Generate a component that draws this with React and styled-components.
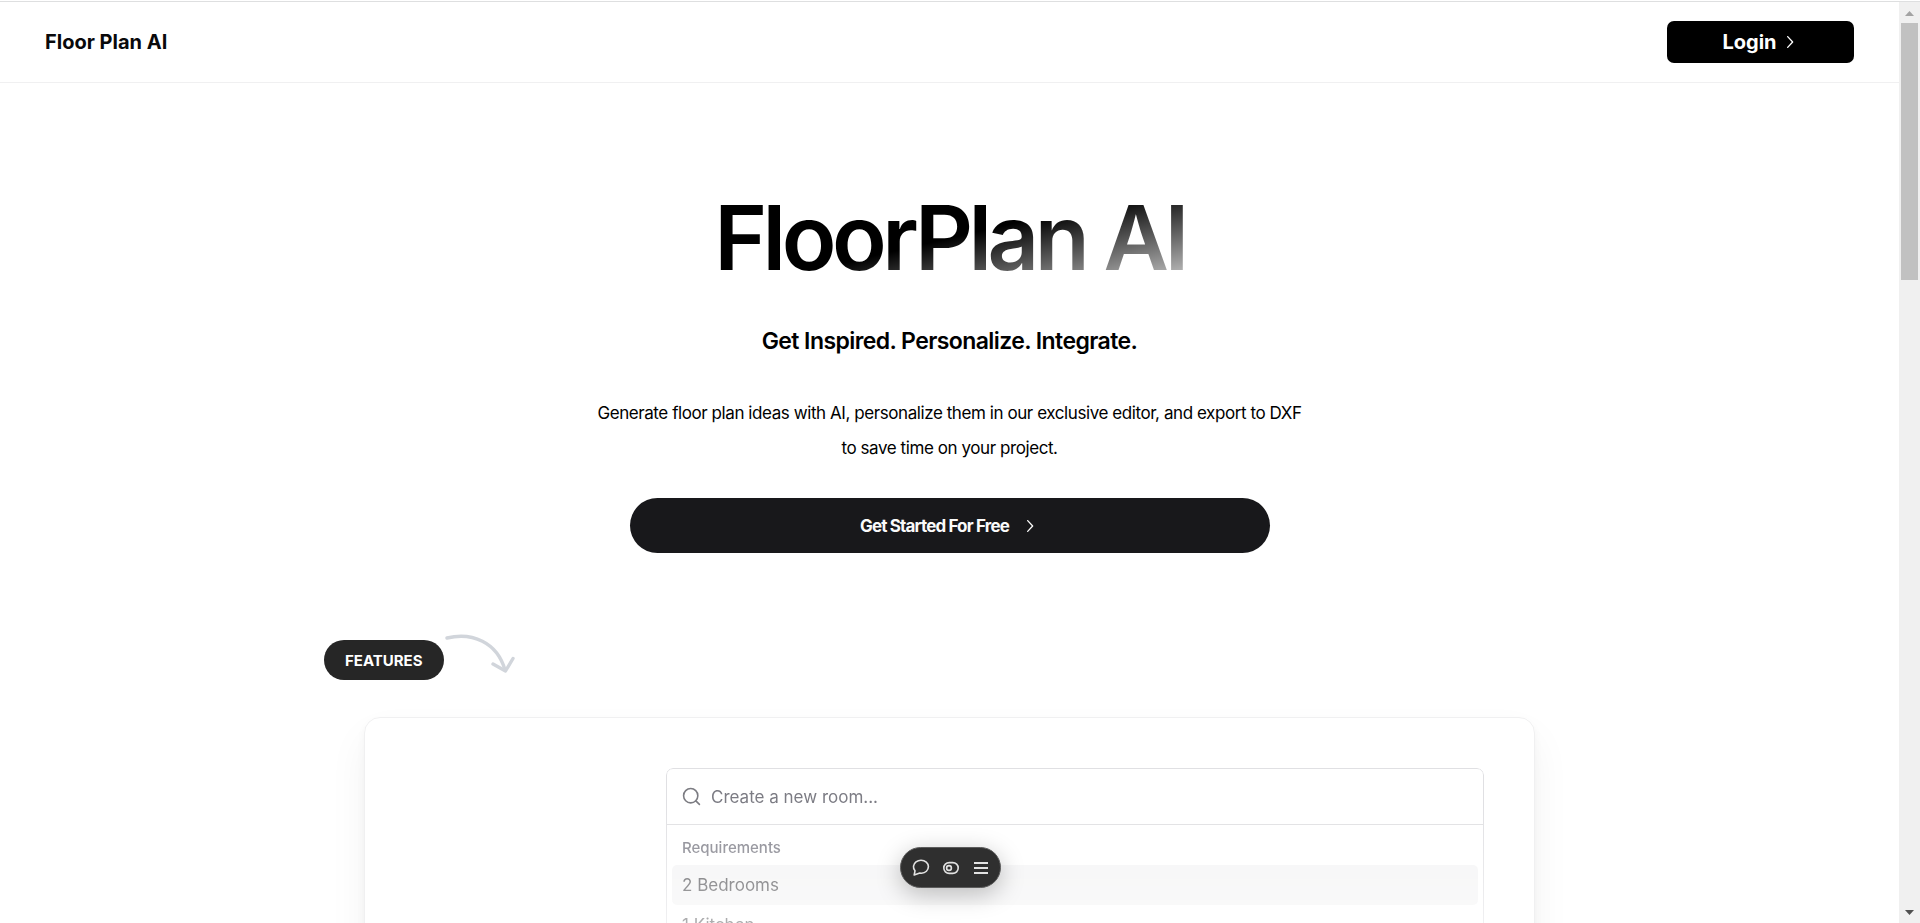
import React from 'react';
import styled, { createGlobalStyle } from 'styled-components';

const GlobalStyle = createGlobalStyle`
  * {
    box-sizing: border-box;
  }
  body {
    margin: 0;
    background: #fff;
    color: #09090b;
    font-family: Inter, 'Liberation Sans', sans-serif;
    overflow: hidden;
  }
  button,
  input {
    font-family: inherit;
  }
`;

const Window = styled.div`
  display: flex;
  height: 100vh;
  padding-top: 1px;
`;

const Page = styled.div`
  flex: 1;
  min-width: 0;
  overflow: hidden;
  border-top: 1px solid #dedfe0;
`;

const Header = styled.header`
  display: flex;
  align-items: center;
  justify-content: space-between;
  height: 81px;
  padding: 0 45px;
  border-bottom: 1px solid #f0f0f1;
`;

const Brand = styled.a`
  color: #09090b;
  font-size: 20px;
  font-weight: 700;
  line-height: 28px;
  text-decoration: none;
`;

const LoginButton = styled.button`
  display: flex;
  align-items: center;
  justify-content: center;
  gap: 2px;
  width: 187px;
  height: 42px;
  border: none;
  border-radius: 7px;
  background: #000;
  color: #fff;
  font-size: 20px;
  font-weight: 700;
  cursor: pointer;
`;

const Hero = styled.section`
  display: flex;
  flex-direction: column;
  align-items: center;
  padding: 80px 20px 87px;
  text-align: center;
`;

const Title = styled.h1`
  width: 100%;
  max-width: 640px;
  margin: 0;
  padding: 30px 0;
  background: linear-gradient(to bottom right, #000 50%, transparent 92%);
  background-clip: text;
  -webkit-background-clip: text;
  color: transparent;
  font-size: 90px;
  font-weight: 600;
  line-height: 90px;
  letter-spacing: -0.05em;
`;

const Subtitle = styled.h2`
  margin: 13px 0 40px;
  color: #000;
  font-size: 23px;
  font-weight: 600;
  line-height: 30px;
  letter-spacing: -0.025em;
`;

const Lead = styled.p`
  max-width: 715px;
  margin: 0 0 32px;
  color: #000;
  font-size: 17px;
  line-height: 35px;
  letter-spacing: -0.025em;
`;

const StartButton = styled.button`
  display: flex;
  align-items: center;
  justify-content: center;
  gap: 10px;
  width: 100%;
  max-width: 640px;
  height: 55px;
  border: none;
  border-radius: 28px;
  background: #18181b;
  color: #fafafa;
  font-size: 17px;
  font-weight: 700;
  letter-spacing: -0.05em;
  cursor: pointer;
`;

const Features = styled.section`
  max-width: 1251px;
  margin: 0 auto;
`;

const FeaturesHead = styled.div`
  display: flex;
  height: 40px;
`;

const Badge = styled.span`
  display: flex;
  align-items: center;
  padding: 0 21px;
  border-radius: 20px;
  background: #262626;
  color: #fff;
  font-size: 15px;
  font-weight: 700;
`;

const CurvedArrow = styled.svg`
  width: 72px;
  height: 44px;
  margin-top: -8px;
`;

const Card = styled.div`
  display: flex;
  justify-content: flex-end;
  margin: 37px 40px 0;
  padding: 50px;
  border: 1px solid #f0f0f1;
  border-radius: 16px;
  box-shadow:
    0 20px 40px rgba(0, 0, 0, 0.05),
    0 4px 8px rgba(0, 0, 0, 0.04);
`;

const Command = styled.div`
  flex: 1;
  max-width: 818px;
  height: 360px;
  border: 1px solid #e0e0e3;
  border-radius: 7px;
  mask-image: linear-gradient(to bottom, #000 10%, transparent 75%);
`;

const SearchBar = styled.label`
  display: flex;
  align-items: center;
  gap: 10px;
  height: 56px;
  padding: 0 15px;
  border-bottom: 1px solid #e0e0e3;
  color: #7c7c82;
`;

const SearchInput = styled.input`
  flex: 1;
  padding: 0;
  border: none;
  outline: none;
  background: none;
  color: #09090b;
  font-size: 17px;
  &::placeholder {
    color: #7c7c84;
  }
`;

const GroupLabel = styled.div`
  padding: 13px 15px 7px;
  color: #83838c;
  font-size: 15px;
  font-weight: 500;
  line-height: 20px;
`;

const Options = styled.ul`
  margin: 0;
  padding: 0 5px;
  list-style: none;
`;

const Option = styled.li`
  padding: 0 10px;
  border-radius: 5px;
  background: ${p => (p.$active ? '#f4f4f5' : 'none')};
  color: #5a5a5e;
  font-size: 17px;
  line-height: 40px;
`;

const Toolbar = styled.div`
  position: fixed;
  bottom: 35px;
  left: 50%;
  display: flex;
  align-items: center;
  justify-content: center;
  width: 101px;
  height: 41px;
  margin-left: -60px;
  border: 1px solid #5c5c5c;
  border-radius: 21px;
  background: #2f2f2f;
  box-shadow: 0 6px 24px rgba(0, 0, 0, 0.25);
`;

const ToolButton = styled.button`
  display: flex;
  align-items: center;
  justify-content: center;
  width: 30px;
  height: 30px;
  padding: 0;
  border: none;
  background: none;
  color: #e2e2e2;
  cursor: pointer;
`;

const Scrollbar = styled.div`
  display: flex;
  flex-direction: column;
  width: 21px;
  border-top: 1px solid #dedfe0;
  background: #f0f0f0;
`;

const ScrollArrow = styled.svg`
  width: 21px;
  height: 21px;
  fill: ${p => p.$color};
`;

const ScrollTrack = styled.div`
  flex: 1;
  padding: 0 2px;
`;

const ScrollThumb = styled.div`
  height: 257px;
  background: #c1c1c1;
`;

function Chevron() {
  return (
    <svg width="20" height="20" viewBox="0 0 15 15" fill="currentColor">
      <path d="M6.1584 3.13508C6.35985 2.94621 6.67627 2.95642 6.86514 3.15788L10.6151 7.15788C10.7954 7.3502 10.7954 7.64949 10.6151 7.84182L6.86514 11.8418C6.67627 12.0433 6.35985 12.0535 6.1584 11.8646C5.95694 11.6757 5.94673 11.3593 6.1356 11.1579L9.565 7.49985L6.1356 3.84182C5.94673 3.64036 5.95694 3.32394 6.1584 3.13508Z" />
    </svg>
  );
}

function SearchIcon() {
  return (
    <svg
      width="19"
      height="19"
      viewBox="0 0 24 24"
      fill="none"
      stroke="currentColor"
      strokeWidth="2"
      strokeLinecap="round"
    >
      <circle cx="11" cy="11" r="9" />
      <path d="M22 22l-4.5-4.5" />
    </svg>
  );
}

function CommentIcon() {
  return (
    <svg
      width="18"
      height="18"
      viewBox="0 0 18 18"
      fill="none"
      stroke="currentColor"
      strokeWidth="1.6"
      strokeLinejoin="round"
    >
      <path d="M2.2 15.9L3 11.8C1.7 10.4 1.3 8.8 1.5 7.2C2 3.8 5.2 1.3 9 1.3C13.2 1.3 16.4 4 16.4 7.6C16.4 11.4 13.4 14.1 9.5 14.2C8.9 14.2 8.3 14.2 7.8 14.1Z" />
    </svg>
  );
}

function FlagsIcon() {
  return (
    <svg
      width="18"
      height="18"
      viewBox="0 0 18 18"
      fill="none"
      stroke="currentColor"
      strokeWidth="1.6"
    >
      <rect x="1.8" y="3.6" width="14.4" height="10.8" rx="5.4" />
      <circle cx="7" cy="9" r="2.4" />
    </svg>
  );
}

function MenuIcon() {
  return (
    <svg
      width="18"
      height="18"
      viewBox="0 0 18 18"
      stroke="currentColor"
      strokeWidth="1.8"
    >
      <path d="M2 4h14M2 9h14M2 14h14" />
    </svg>
  );
}

const rooms = ['2 Bedrooms', '1 Kitchen', '1 Bathroom', '1 Living Room'];

export default function App() {
  return (
    <Window>
      <GlobalStyle />
      <Page>
        <Header>
          <Brand href="#">Floor Plan AI</Brand>
          <LoginButton type="button">
            Login
            <Chevron />
          </LoginButton>
        </Header>
        <main>
          <Hero>
            <Title>FloorPlan AI</Title>
            <Subtitle>Get Inspired. Personalize. Integrate.</Subtitle>
            <Lead>
              Generate floor plan ideas with AI, personalize them in our
              exclusive editor, and export to DXF to save time on your project.
            </Lead>
            <StartButton type="button">
              Get Started For Free
              <Chevron />
            </StartButton>
          </Hero>
          <Features>
            <FeaturesHead>
              <Badge>FEATURES</Badge>
              <CurvedArrow
                viewBox="0 0 72 44"
                fill="none"
                stroke="#d1d5db"
                strokeWidth="3.4"
                strokeLinecap="round"
                strokeLinejoin="round"
              >
                <path d="M3 6C28 0 53 10 61 38" />
                <path d="M49 32L61.5 39L69 26.5" />
              </CurvedArrow>
            </FeaturesHead>
            <Card>
              <Command>
                <SearchBar>
                  <SearchIcon />
                  <SearchInput
                    type="text"
                    aria-label="Create a new room"
                    placeholder="Create a new room..."
                  />
                </SearchBar>
                <GroupLabel>Requirements</GroupLabel>
                <Options>
                  {rooms.map((room, i) => (
                    <Option key={room} $active={i === 0}>
                      {room}
                    </Option>
                  ))}
                </Options>
              </Command>
            </Card>
          </Features>
        </main>
      </Page>
      <Scrollbar aria-hidden="true">
        <ScrollArrow viewBox="0 0 21 21" $color="#a3a3a3">
          <path d="M6 14L10.5 9L15 14Z" />
        </ScrollArrow>
        <ScrollTrack>
          <ScrollThumb />
        </ScrollTrack>
        <ScrollArrow viewBox="0 0 21 21" $color="#505050">
          <path d="M6 8L10.5 13L15 8Z" />
        </ScrollArrow>
      </Scrollbar>
      <Toolbar>
        <ToolButton type="button" aria-label="Comment">
          <CommentIcon />
        </ToolButton>
        <ToolButton type="button" aria-label="Flags">
          <FlagsIcon />
        </ToolButton>
        <ToolButton type="button" aria-label="Menu">
          <MenuIcon />
        </ToolButton>
      </Toolbar>
    </Window>
  );
}
